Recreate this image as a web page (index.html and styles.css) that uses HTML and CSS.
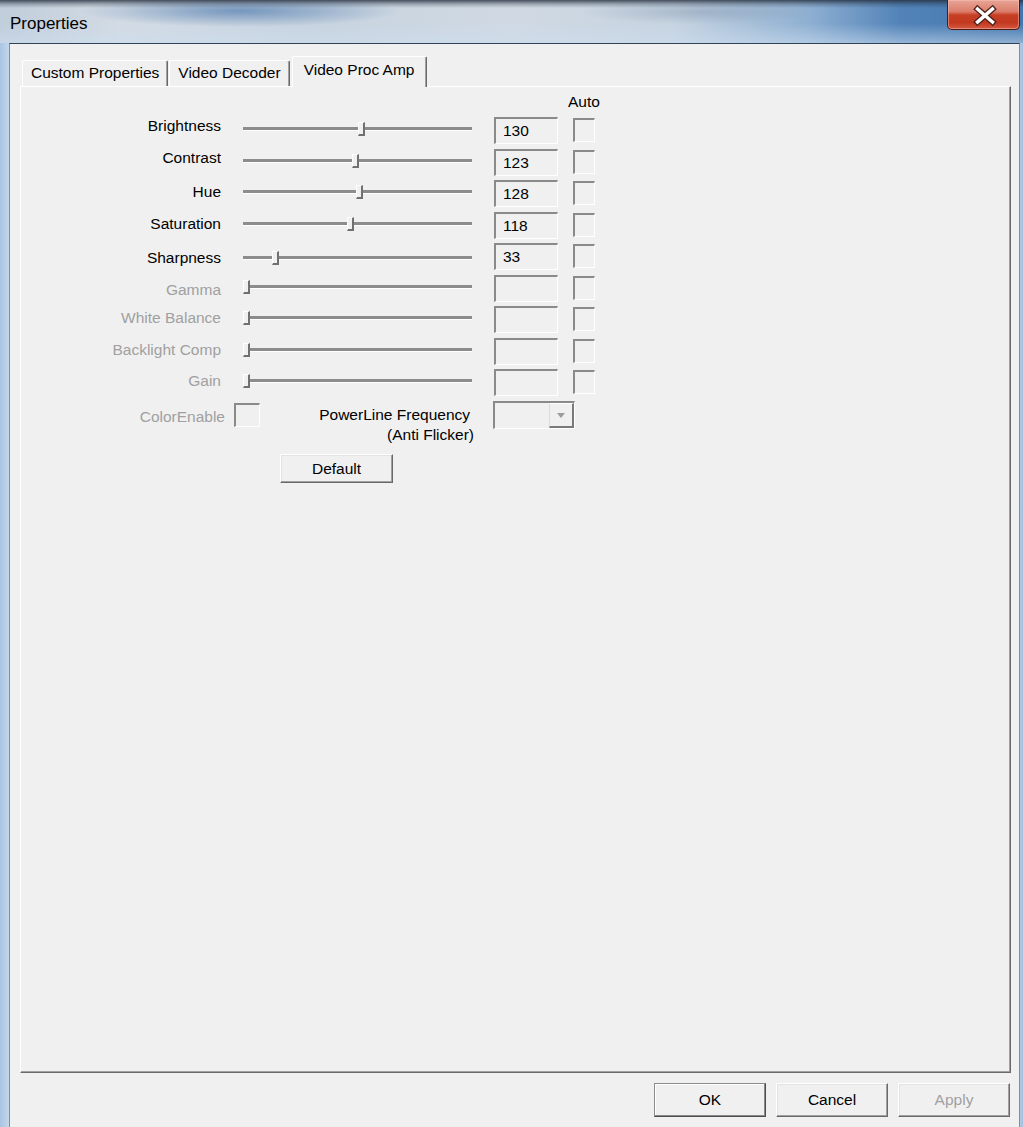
FILE: index.html
```html
<!DOCTYPE html>
<html>
<head>
<meta charset="utf-8">
<title>Properties</title>
<link rel="stylesheet" href="styles.css">
</head>
<body>
<div class="window">
  <div class="titlebar">
    <span class="title">Properties</span>
    <div class="close">
      <svg width="73" height="29" viewBox="0 0 73 29">
        <path d="M29.5 9 L44.5 22 M44.5 9 L29.5 22" stroke="#4a2018" stroke-width="6" stroke-linecap="square" fill="none"/>
        <path d="M29.5 9 L44.5 22 M44.5 9 L29.5 22" stroke="#ffffff" stroke-width="3.4" stroke-linecap="square" fill="none"/>
      </svg>
    </div>
  </div>
  <div class="frame">
    <div class="client">
      <div class="tabs">
        <div class="tab">Custom Properties</div>
        <div class="tab">Video Decoder</div>
        <div class="tab selected">Video Proc Amp</div>
      </div>
      <div class="panel">
        <div class="auto-head">Auto</div>
        <div class="grid">
          <div class="lbl hi">Brightness</div>
          <div class="slider"><div class="track"></div><div class="thumb" style="left:115px"></div></div>
          <div class="edit">130</div>
          <div class="chk"></div>

          <div class="lbl hi">Contrast</div>
          <div class="slider"><div class="track"></div><div class="thumb" style="left:109px"></div></div>
          <div class="edit">123</div>
          <div class="chk"></div>

          <div class="lbl">Hue</div>
          <div class="slider"><div class="track"></div><div class="thumb" style="left:113px"></div></div>
          <div class="edit">128</div>
          <div class="chk"></div>

          <div class="lbl">Saturation</div>
          <div class="slider"><div class="track"></div><div class="thumb" style="left:104px"></div></div>
          <div class="edit">118</div>
          <div class="chk"></div>

          <div class="lbl lo">Sharpness</div>
          <div class="slider lo"><div class="track"></div><div class="thumb" style="left:29px"></div></div>
          <div class="edit">33</div>
          <div class="chk"></div>

          <div class="lbl lo dis">Gamma</div>
          <div class="slider"><div class="track"></div><div class="thumb" style="left:0px"></div></div>
          <div class="edit"></div>
          <div class="chk"></div>

          <div class="lbl dis">White Balance</div>
          <div class="slider"><div class="track"></div><div class="thumb" style="left:0px"></div></div>
          <div class="edit"></div>
          <div class="chk"></div>

          <div class="lbl dis">Backlight Comp</div>
          <div class="slider"><div class="track"></div><div class="thumb" style="left:0px"></div></div>
          <div class="edit"></div>
          <div class="chk"></div>

          <div class="lbl dis">Gain</div>
          <div class="slider"><div class="track"></div><div class="thumb" style="left:0px"></div></div>
          <div class="edit"></div>
          <div class="chk"></div>
        </div>
        <div class="extra">
          <div class="ce-label dis">ColorEnable</div>
          <div class="ce-check"></div>
          <div class="pl-label"><span class="pl-line1">PowerLine Frequency</span><span class="pl-line2">(Anti Flicker)</span></div>
          <div class="combo"><div class="combo-btn"><span class="arrow"></span></div></div>
        </div>
        <button class="btn default-btn">Default</button>
      </div>
      <div class="buttons">
        <button class="btn bottom ok">OK</button>
        <button class="btn bottom">Cancel</button>
        <button class="btn bottom disabled">Apply</button>
      </div>
    </div>
  </div>
</div>
</body>
</html>
```
FILE: styles.css
```css
html, body {
  margin: 0;
  padding: 0;
}
body {
  width: 1023px;
  height: 1127px;
  overflow: hidden;
  font-family: "Liberation Sans", Arial, sans-serif;
  font-size: 15.5px;
  color: #000;
  background: #b4cce6;
}
.window {
  display: flex;
  flex-direction: column;
  height: 1127px;
}
.titlebar {
  flex: none;
  height: 43px;
  display: flex;
  align-items: flex-start;
  background:
    linear-gradient(to bottom, rgba(35,45,60,0.8) 0px, rgba(35,45,60,0.3) 4px, rgba(35,45,60,0) 8px),
    radial-gradient(ellipse 160px 16px at 240px 11px, rgba(60,108,165,0.6), rgba(60,108,165,0)),
    radial-gradient(ellipse 120px 12px at 700px 12px, rgba(110,132,160,0.35), rgba(110,132,160,0)),
    linear-gradient(to bottom, rgba(255,255,255,0) 55%, rgba(205,222,240,0.55) 100%),
    linear-gradient(to right, #c0cdda 0%, #d3dbe4 12%, #c7d3df 30%, #d0d9e3 50%, #c6d3e0 66%, #8fb0d2 79%, #5283b8 88%, #4376ad 100%);
}
.title {
  margin: 13px 0 0 10px;
  font-size: 17px;
  line-height: 22px;
  color: #000;
}
.close {
  margin-left: auto;
  margin-right: 3px;
  width: 73px;
  height: 30px;
  box-sizing: border-box;
  border: 1px solid #4e1c12;
  border-top: none;
  border-radius: 0 0 5px 5px;
  background: linear-gradient(to bottom, #e7a596 0%, #dc7d6b 40%, #c63f25 52%, #c2391f 78%, #d45a42 100%);
  box-shadow: inset 0 0 0 1px rgba(255,200,190,0.45);
}
.close svg {
  display: block;
}
.frame {
  flex: 1;
  display: flex;
  min-height: 0;
  padding: 0 3px 0 9px;
  background: linear-gradient(to right, #a9c4e2 0px, #c3d7ec 9px, #b0cae6 1020px, #a2c0e2 1023px);
}
.client {
  flex: 1;
  display: flex;
  flex-direction: column;
  background: #f0f0f0;
  border: 1px solid #7b8ea4;
  border-top-color: #2f4256;
  border-bottom: none;
}
.tabs {
  flex: none;
  height: 42px;
  display: flex;
  align-items: flex-end;
  padding-left: 12px;
  position: relative;
  z-index: 1;
}
.tab {
  height: 26px;
  box-sizing: border-box;
  padding: 0 8px;
  line-height: 24px;
  border-top: 1px solid #fff;
  border-left: 1px solid #fff;
  border-right: 1px solid #696969;
  box-shadow: inset -1px 0 #a0a0a0;
  border-radius: 2px 2px 0 0;
  margin-right: 1px;
  background: #f0f0f0;
  white-space: nowrap;
}
.tab.selected {
  height: 31px;
  line-height: 26px;
  padding: 0 11px;
  margin-left: 1px;
  margin-bottom: -1px;
}
.panel {
  flex: 1;
  min-height: 0;
  margin: 0 8px 0 10px;
  box-sizing: border-box;
  border: 1px solid;
  border-color: #fff #696969 #696969 #fff;
  box-shadow: inset -1px -1px #a0a0a0;
  padding-top: 5px;
}
.auto-head {
  height: 20px;
  line-height: 20px;
  padding-left: 547px;
  margin-bottom: 5px;
}
.grid {
  display: grid;
  grid-template-columns: 143px 251px 79px 22px;
  grid-auto-rows: 31.5px;
  margin-left: 79px;
}
.lbl {
  text-align: right;
  padding-right: 22px;
  line-height: 22px;
  margin-top: 1px;
  white-space: nowrap;
}
.lbl.hi {
  margin-top: -2px;
}
.lbl.lo {
  margin-top: 4px;
}
.dis {
  color: #a0a0a0;
}
.slider {
  position: relative;
  width: 229px;
}
.slider.lo {
  margin-top: 3px;
}
.track {
  margin-top: 10px;
  height: 3px;
  background: #8c8c8c;
  border-bottom: 1px solid #fff;
}
.thumb {
  position: absolute;
  top: 5px;
  width: 7px;
  height: 14px;
  box-sizing: border-box;
  border-left: 1px solid #fff;
  border-top: 1px solid #fff;
  border-right: 2px solid #707070;
  border-bottom: 2px solid #707070;
  background: #f0f0f0;
}
.edit {
  width: 64px;
  height: 27px;
  box-sizing: border-box;
  border-style: solid;
  border-width: 2px 1px 1px 2px;
  border-color: #8a8a8a #fff #fff #8a8a8a;
  padding-left: 7px;
  line-height: 24px;
}
.chk {
  width: 22px;
  height: 24px;
  box-sizing: border-box;
  border-style: solid;
  border-width: 2px 1px 1px 2px;
  border-color: #8a8a8a #fff #fff #8a8a8a;
  margin-top: 1px;
}
.extra {
  display: flex;
  align-items: flex-start;
  height: 45px;
}
.ce-label {
  width: 204px;
  text-align: right;
  line-height: 20px;
  margin-top: 6px;
}
.ce-check {
  width: 26px;
  height: 24px;
  box-sizing: border-box;
  border-style: solid;
  border-width: 2px 1px 1px 2px;
  border-color: #8a8a8a #fff #fff #8a8a8a;
  margin: 2.5px 0 0 9px;
}
.pl-label {
  width: 214px;
  text-align: right;
  line-height: 20px;
  margin-top: 4px;
}
.pl-line1 {
  display: block;
  padding-right: 4px;
}
.pl-line2 {
  display: block;
}
.combo {
  width: 82px;
  height: 28px;
  box-sizing: border-box;
  margin: 0.5px 0 0 19px;
  border-style: solid;
  border-width: 2px 1px 1px 2px;
  border-color: #8a8a8a #fff #fff #8a8a8a;
  display: flex;
  justify-content: flex-end;
}
.combo-btn {
  width: 25px;
  height: 25px;
  box-sizing: border-box;
  border-style: solid;
  border-width: 1px 2px 2px 1px;
  border-color: #fff #7a7a7a #7a7a7a #dcdcdc;
  background: #f0f0f0;
  display: flex;
  align-items: center;
  justify-content: center;
}
.arrow {
  width: 0;
  height: 0;
  border-left: 4.5px solid transparent;
  border-right: 4.5px solid transparent;
  border-top: 5px solid #9c9c9c;
}
.btn {
  font-family: inherit;
  font-size: 15.5px;
  color: #000;
  background: #f0f0f0;
  border: 1px solid;
  border-color: #fff #696969 #696969 #fff;
  box-shadow: inset -1px -1px #a0a0a0, inset 1px 1px #e3e3e3;
  padding: 0;
  margin: 0;
  box-sizing: border-box;
}
.default-btn {
  display: block;
  width: 113px;
  height: 29px;
  margin: 8.5px 0 0 259px;
}
.buttons {
  flex: none;
  display: flex;
  justify-content: flex-end;
  gap: 10px;
  margin: 10px 9px 10px 0;
}
.bottom {
  width: 112px;
  height: 34px;
}
.ok {
  border-color: #8c8c8c #4e4e4e #4e4e4e #8c8c8c;
  box-shadow: inset -1px -1px #8a8a8a, inset 1px 1px #ffffff;
}
.disabled {
  color: #a0a0a0;
}
```
